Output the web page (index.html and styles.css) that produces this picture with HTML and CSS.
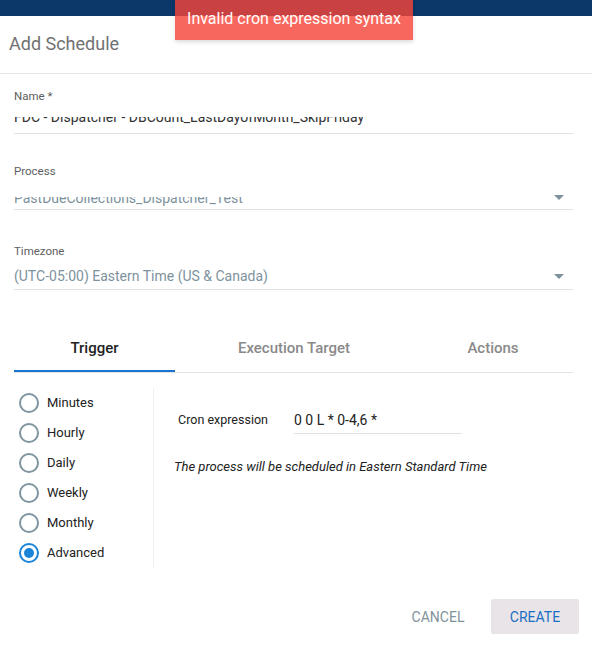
FILE: index.html
```html
<!DOCTYPE html>
<html>
<head>
<meta charset="utf-8">
<link rel="stylesheet" href="styles.css">
</head>
<body>
<div class="topbar"></div>
<div class="dialog">
  <div class="dialog-title">Add Schedule</div>
  <div class="form">
    <div class="field field-name">
      <div class="field-label">Name *</div>
      <div class="field-value value-name">
        <div class="clip clip-name"><span class="clip-text">FDC - Dispatcher - DBCount_LastDayofMonth_SkipFriday</span></div>
      </div>
    </div>
    <div class="field field-process">
      <div class="field-label">Process</div>
      <div class="field-value value-process">
        <div class="clip clip-process"><span class="clip-text muted">PastDueCollections_Dispatcher_Test</span></div>
        <span class="arrow arrow-up"></span>
      </div>
    </div>
    <div class="field field-timezone">
      <div class="field-label">Timezone</div>
      <div class="field-value value-timezone">
        <span class="select-text muted">(UTC-05:00) Eastern Time (US &amp; Canada)</span>
        <span class="arrow"></span>
      </div>
    </div>

    <div class="tabs">
      <div class="tab active">Trigger</div>
      <div class="tab">Execution Target</div>
      <div class="tab">Actions</div>
    </div>

    <div class="trigger-body">
      <div class="radio-list">
        <div class="radio-row"><span class="radio"></span><span class="radio-label">Minutes</span></div>
        <div class="radio-row"><span class="radio"></span><span class="radio-label">Hourly</span></div>
        <div class="radio-row"><span class="radio"></span><span class="radio-label">Daily</span></div>
        <div class="radio-row"><span class="radio"></span><span class="radio-label">Weekly</span></div>
        <div class="radio-row"><span class="radio"></span><span class="radio-label">Monthly</span></div>
        <div class="radio-row"><span class="radio checked"></span><span class="radio-label">Advanced</span></div>
      </div>
      <div class="trigger-detail">
        <div class="cron-row">
          <span class="cron-label">Cron expression</span>
          <span class="cron-input">0 0 L * 0-4,6 *</span>
        </div>
        <div class="note">The process will be scheduled in Eastern Standard Time</div>
      </div>
    </div>
  </div>
  <div class="actions">
    <button class="btn btn-cancel">CANCEL</button>
    <button class="btn btn-create">CREATE</button>
  </div>
</div>
<div class="toast">Invalid cron expression syntax</div>
</body>
</html>
```

FILE: styles.css
```css
* { box-sizing: border-box; }
html, body { margin: 0; padding: 0; background: #ffffff; }
body {
  font-family: Roboto, "Noto Sans", "Liberation Sans", sans-serif;
  color: #222;
  width: 592px;
  height: 650px;
  overflow: hidden;
  position: relative;
}
.topbar {
  height: 16px;
  background: #0b3769;
}
.dialog { background: #fff; }
.dialog-title {
  padding: 17px 0 19px 9px;
  font-size: 18px;
  line-height: 21px;
  color: #717171;
  border-bottom: 1px solid #e3e3e3;
}
.form {
  padding: 16px 19px 0 14px;
}
.field-label {
  font-size: 11.5px;
  line-height: 13px;
  color: #5e5e5e;
}
.field-value {
  border-bottom: 1px solid #e2e2e2;
  display: flex;
}
.clip {
  flex: 1;
  overflow: hidden;
}
.clip-text {
  display: block;
  font-size: 14px;
  line-height: 16px;
  white-space: nowrap;
}
.muted { color: #7d929d; }
.value-name { margin-top: 14px; height: 17px; }
.clip-name { height: 16px; }
.clip-name .clip-text { margin-top: -8px; color: #333; }
.field-process { margin-top: 31px; }
.value-process { margin-top: 19px; height: 13px; }
.clip-process { height: 12px; }
.clip-process .clip-text { margin-top: -7px; }
.field-timezone { margin-top: 35px; }
.value-timezone {
  margin-top: 10px;
  padding-bottom: 5px;
  align-items: center;
}
.select-text {
  flex: 1;
  font-size: 14px;
  line-height: 16px;
}
.arrow {
  width: 0;
  height: 0;
  border-left: 5px solid transparent;
  border-right: 5px solid transparent;
  border-top: 5px solid #7d929d;
  margin-right: 9px;
}
.arrow-up {
  align-self: flex-start;
  margin-top: -2px;
}
.tabs {
  margin-top: 35px;
  display: grid;
  grid-template-columns: 161px 238px 1fr;
  border-bottom: 1px solid #e3e3e3;
}
.tab {
  height: 47px;
  line-height: 46px;
  text-align: center;
  font-size: 15px;
  font-weight: 500;
  color: #8a8a8a;
}
.tab.active {
  color: #222;
  box-shadow: inset 0 -2px 0 #1a73cf;
}
.trigger-body {
  margin-top: 15px;
  display: flex;
}
.radio-list {
  width: 140px;
  border-right: 1px solid #f0f0f0;
  padding-left: 5px;
}
.radio-row {
  height: 30px;
  display: flex;
  align-items: center;
}
.radio {
  width: 20px;
  height: 20px;
  border: 2px solid #7f959f;
  border-radius: 50%;
  display: flex;
  align-items: center;
  justify-content: center;
}
.radio.checked { border-color: #1a84d9; }
.radio.checked::after {
  content: "";
  width: 10px;
  height: 10px;
  border-radius: 50%;
  background: #1a84d9;
}
.radio-label {
  margin-left: 8px;
  font-size: 13px;
  line-height: 16px;
  color: #222;
}
.trigger-detail {
  padding: 24px 0 0 24px;
}
.cron-row {
  display: flex;
  align-items: flex-start;
}
.cron-label {
  width: 116px;
  font-size: 12.5px;
  line-height: 16px;
}
.cron-input {
  width: 168px;
  font-size: 14px;
  line-height: 16px;
  padding-bottom: 5px;
  border-bottom: 1px solid #e2e2e2;
}
.note {
  margin-top: 25px;
  margin-left: -4px;
  font-size: 13px;
  line-height: 16px;
  font-style: italic;
}
.actions {
  display: flex;
  justify-content: flex-end;
  gap: 9px;
  padding: 31px 13px 0 0;
}
.btn {
  font-family: Roboto, "Noto Sans", "Liberation Sans", sans-serif;
  min-width: 88px;
  height: 35px;
  border: none;
  border-radius: 2px;
  font-size: 14px;
  background: transparent;
  padding: 0 10px;
}
.btn-cancel { color: #7f929c; }
.btn-create { background: #e8e4e8; color: #1a6fc4; }
.toast {
  position: absolute;
  left: 175px;
  top: 0;
  width: 238px;
  height: 40px;
  padding-top: 9px;
  text-align: center;
  font-size: 16px;
  line-height: 19px;
  color: #fff;
  background: rgba(245, 68, 56, 0.81);
  box-shadow: 0 2px 4px rgba(0, 0, 0, 0.15);
}
```
